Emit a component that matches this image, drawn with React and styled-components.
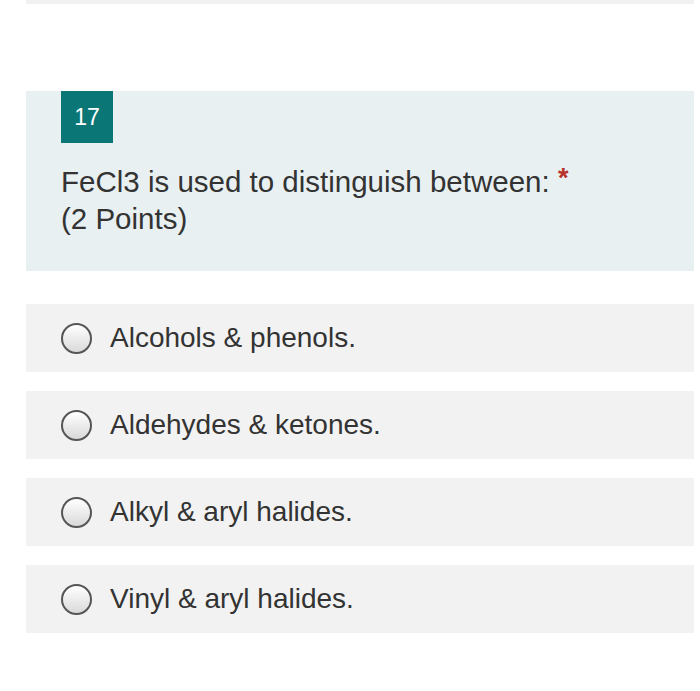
import React from "react";
import styled, { createGlobalStyle } from "styled-components";

const GlobalStyle = createGlobalStyle`
  html, body {
    margin: 0;
    padding: 0;
    background: #ffffff;
  }
  body {
    font-family: "Liberation Sans", Arial, sans-serif;
    color: #333333;
  }
`;

const options = [
  "Alcohols & phenols.",
  "Aldehydes & ketones.",
  "Alkyl & aryl halides.",
  "Vinyl & aryl halides.",
];

const App = () => {
  return (
    <>
      <GlobalStyle />
      <Page>
        <TopBar />
        <QuestionCard>
          <Badge>17</Badge>
          <Title>
            FeCl3 is used to distinguish between: <Required>*</Required>
            <br />
            (2 Points)
          </Title>
        </QuestionCard>
        <OptionList>
          {options.map((opt) => (
            <Option key={opt}>
              <Radio />
              <OptionText>{opt}</OptionText>
            </Option>
          ))}
        </OptionList>
      </Page>
    </>
  );
};

const Page = styled.div`
  width: 668px;
  margin-left: 26px;
  height: 691px;
`;

const TopBar = styled.div`
  height: 4px;
  background: #f1f1f1;
  margin-bottom: 87px;
`;

const QuestionCard = styled.div`
  background: #e8f0f2;
  height: 180px;
  box-sizing: border-box;
  padding-left: 35px;
`;

const Badge = styled.div`
  width: 52px;
  height: 52px;
  background: #0a7675;
  color: #ffffff;
  font-size: 23px;
  display: flex;
  align-items: center;
  justify-content: center;
`;

const Title = styled.div`
  margin-top: 17px;
  font-size: 29.5px;
  line-height: 37px;
  color: #333333;
`;

const Required = styled.span`
  color: #b8302a;
  font-size: 27px;
  font-weight: bold;
  vertical-align: 5px;
`;

const OptionList = styled.div`
  display: flex;
  flex-direction: column;
  gap: 19px;
  margin-top: 33px;
`;

const Option = styled.div`
  height: 68px;
  background: #f2f2f2;
  display: flex;
  align-items: center;
  padding-left: 35px;
`;

const Radio = styled.span`
  width: 27px;
  height: 27px;
  border-radius: 50%;
  border: 2px solid #555555;
  background: linear-gradient(#ffffff, #d9d9d9);
  flex-shrink: 0;
`;

const OptionText = styled.span`
  margin-left: 18px;
  font-size: 28px;
  color: #333333;
`;

export default App;
